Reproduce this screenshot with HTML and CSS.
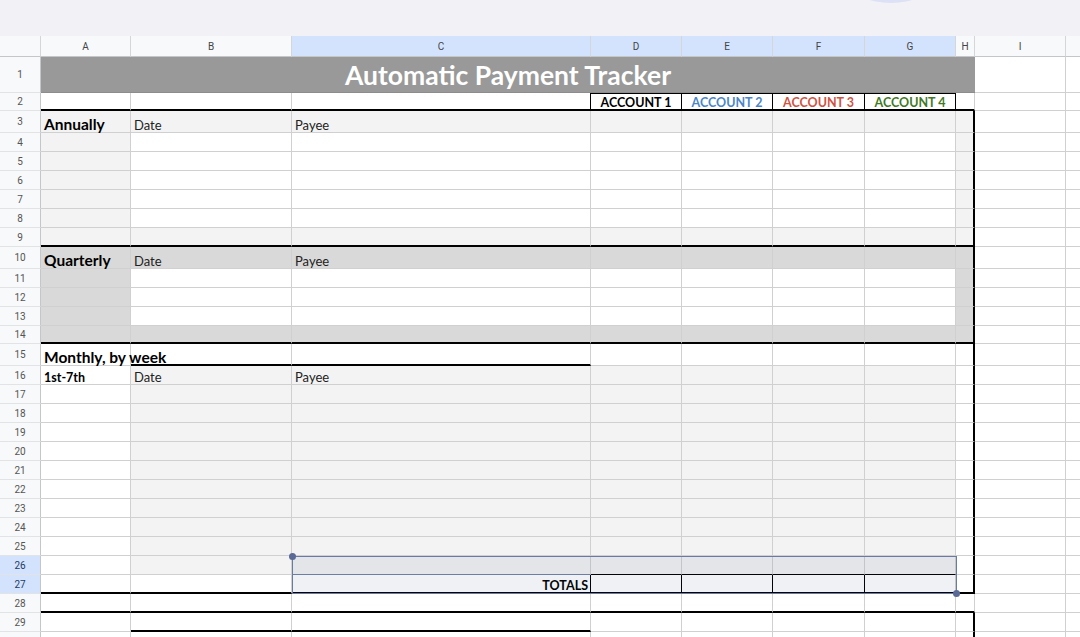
FILE: index.html
```html
<!DOCTYPE html>
<html lang="en">
<head>
  <meta charset="UTF-8" />
  <title>Automatic Payment Tracker</title>
  <link rel="stylesheet" href="styles.css">
</head>
<body>
  <div class="topbar"><span class="avatar"></span></div>
  <div class="sheet" id="sheet"></div>

  <script>
    const sheet = document.getElementById('sheet');
    const COLS = ['A', 'B', 'C', 'D', 'E', 'F', 'G', 'H', 'I', 'J'];
    const ROWS = 30;

    // cell text: [label, extra classes]
    const labels = {
      D2: ['ACCOUNT 1', 'acct'],
      E2: ['ACCOUNT 2', 'acct blue'],
      F2: ['ACCOUNT 3', 'acct red'],
      G2: ['ACCOUNT 4', 'acct green'],
      A3: ['Annually', 'section'], B3: ['Date'], C3: ['Payee'],
      A10: ['Quarterly', 'section'], B10: ['Date'], C10: ['Payee'],
      A15: ['Monthly, by week', 'section'],
      A16: ['1st-7th', 'week'], B16: ['Date'], C16: ['Payee'],
      C27: ['TOTALS', 'totals']
    };

    const thickBottom = { 2: 'AH', 9: 'AH', 14: 'AH', 15: 'BC', 27: 'AH', 28: 'AH', 29: 'BC' };

    const idx = c => COLS.indexOf(c);
    const between = (c, range) => idx(c) >= idx(range[0]) && idx(c) <= idx(range[1]);

    function fill(r, c) {
      if (r === 3 || r === 9) return between(c, 'AH') ? 'light' : '';
      if (r > 3 && r < 9) return (c === 'A' || c === 'H') ? 'light' : '';
      if (r === 10 || r === 14) return between(c, 'AH') ? 'dark' : '';
      if (r > 10 && r < 14) return (c === 'A' || c === 'H') ? 'dark' : '';
      if (r >= 16 && r <= 26) return between(c, 'BG') ? 'light' : '';
      return '';
    }

    function add(cls, text) {
      const el = document.createElement('div');
      el.className = cls;
      if (text) el.textContent = text;
      sheet.appendChild(el);
      return el;
    }

    // column letters (J is only a sliver at the edge)
    add('corner');
    COLS.forEach(c => add('colhead' + (between(c, 'CG') ? ' sel' : ''), c === 'J' ? '' : c));

    for (let r = 1; r <= ROWS; r++) {
      // last row only peeks in under the fold, no number shown
      add('rowhead' + (r === 26 || r === 27 ? ' sel' : ''), r < ROWS ? r : '');

      if (r === 1) {
        add('title', 'Automatic Payment Tracker');
        add('cell');
        add('cell');
        continue;
      }

      COLS.forEach(c => {
        const key = c + r;
        const cls = ['cell'];
        const f = fill(r, c);
        if (f) cls.push(f);
        if (thickBottom[r] && between(c, thickBottom[r])) cls.push('tb');
        if (c === 'H' && ((r >= 3 && r <= 27) || r >= 29)) cls.push('tr');
        if (r === 2 && between(c, 'DG')) cls.push('bt');
        if (r === 2 && between(c, 'CG')) cls.push('br');
        if (r === 26 && between(c, 'DG')) cls.push('bb');
        if (r === 26 && c === 'C') cls.push('selb', 'anchor');
        if (r === 27 && between(c, 'CF')) cls.push('br');
        const lab = labels[key];
        if (lab && lab[1]) cls.push(lab[1]);
        const el = add(cls.join(' '), lab ? lab[0] : '');

        // selected range C26:G27 hangs off its top-left cell
        if (r === 26 && c === 'C') {
          el.innerHTML = '<div class="selection"><span class="handle tl"></span><span class="handle br"></span></div>';
        }
      });
    }
  </script>
</body>
</html>
```

FILE: styles.css
```css
body {
  margin: 0;
  width: 1080px;
  height: 637px;
  overflow: hidden;
  background: #fff;
  font-family: Lato, "Liberation Sans", sans-serif;
  color: #000;
}

.topbar {
  position: relative;
  height: 36px;
  background: #f2f1f6;
  overflow: hidden;
}

.avatar {
  position: absolute;
  left: 813px;
  top: -153px;
  width: 156px;
  height: 156px;
  border-radius: 50%;
  background: #dde1f6;
}

.sheet {
  display: grid;
  grid-template-columns: 41px 90px 161px 299px 91px 91px 92px 91px 19px 91px 91px;
  grid-template-rows: 21px 36px 18px 22px repeat(6, 19px) 22px 19px 19px 19px 18px 22px repeat(15, 19px);
}

.corner,
.colhead {
  box-sizing: border-box;
  background: #f8f9fa;
  border-right: 1px solid #d4d6d8;
  border-bottom: 1px solid #c4c7c9;
}

.colhead {
  display: flex;
  align-items: center;
  justify-content: center;
  font: 10px Roboto, sans-serif;
  color: #444;
}

.colhead.sel {
  background: #d3e3fd;
}

.rowhead {
  box-sizing: border-box;
  display: flex;
  align-items: center;
  justify-content: center;
  background: #f8f9fa;
  border-right: 1px solid #c4c7c9;
  border-bottom: 1px solid #e1e3e5;
  font: 10px Roboto, sans-serif;
  color: #555;
}

.rowhead.sel {
  background: #d3e3fd;
  color: #1f3a66;
}

.title {
  grid-column: 2 / 10;
  box-sizing: border-box;
  display: flex;
  align-items: center;
  justify-content: center;
  background: #999;
  border-bottom: 1px solid #8c8c8c;
  color: #fff;
  font-size: 26.5px;
  font-weight: 700;
}

.cell {
  box-sizing: border-box;
  display: flex;
  align-items: flex-end;
  min-width: 0;
  padding: 0 3px;
  border-right: 1px solid #d0d0d0;
  border-bottom: 1px solid #d0d0d0;
  font-size: 13px;
  line-height: 1;
  color: #222;
  white-space: nowrap;
}

.cell.light { background: #f3f3f3; }
.cell.dark { background: #d9d9d9; }

.cell.tb { border-bottom: 2px solid #000; }
.cell.tr { border-right: 2px solid #000; }
.cell.bt { border-top: 1px solid #000; }
.cell.br { border-right: 1px solid #000; }
.cell.bb { border-bottom: 1px solid #000; }
.cell.selb { border-bottom: 1px solid #7583a8; }

.section {
  font-size: 15.5px;
  font-weight: 700;
  color: #000;
  padding-left: 3px;
}

.week {
  font-size: 12.5px;
  font-weight: 700;
  color: #000;
}

.acct {
  justify-content: center;
  font-size: 12.5px;
  font-weight: 700;
  color: #000;
}

.acct.blue { color: #4a86c8; }
.acct.red { color: #d0533f; }
.acct.green { color: #3f7a25; }

.totals {
  justify-content: flex-end;
  padding-right: 2px;
  font-size: 12.5px;
  font-weight: 700;
  color: #000;
}

.anchor {
  position: relative;
}

.selection {
  position: absolute;
  left: 0;
  top: 0;
  z-index: 2;
  box-sizing: border-box;
  width: 665px;
  height: 38px;
  border: 1px solid #6b7aa3;
  background: rgba(30, 60, 120, 0.07);
}

.handle {
  position: absolute;
  width: 7px;
  height: 7px;
  border-radius: 50%;
  background: #5a6a96;
}

.handle.tl { left: -4px; top: -4px; }
.handle.br { right: -4px; bottom: -4px; }
```
